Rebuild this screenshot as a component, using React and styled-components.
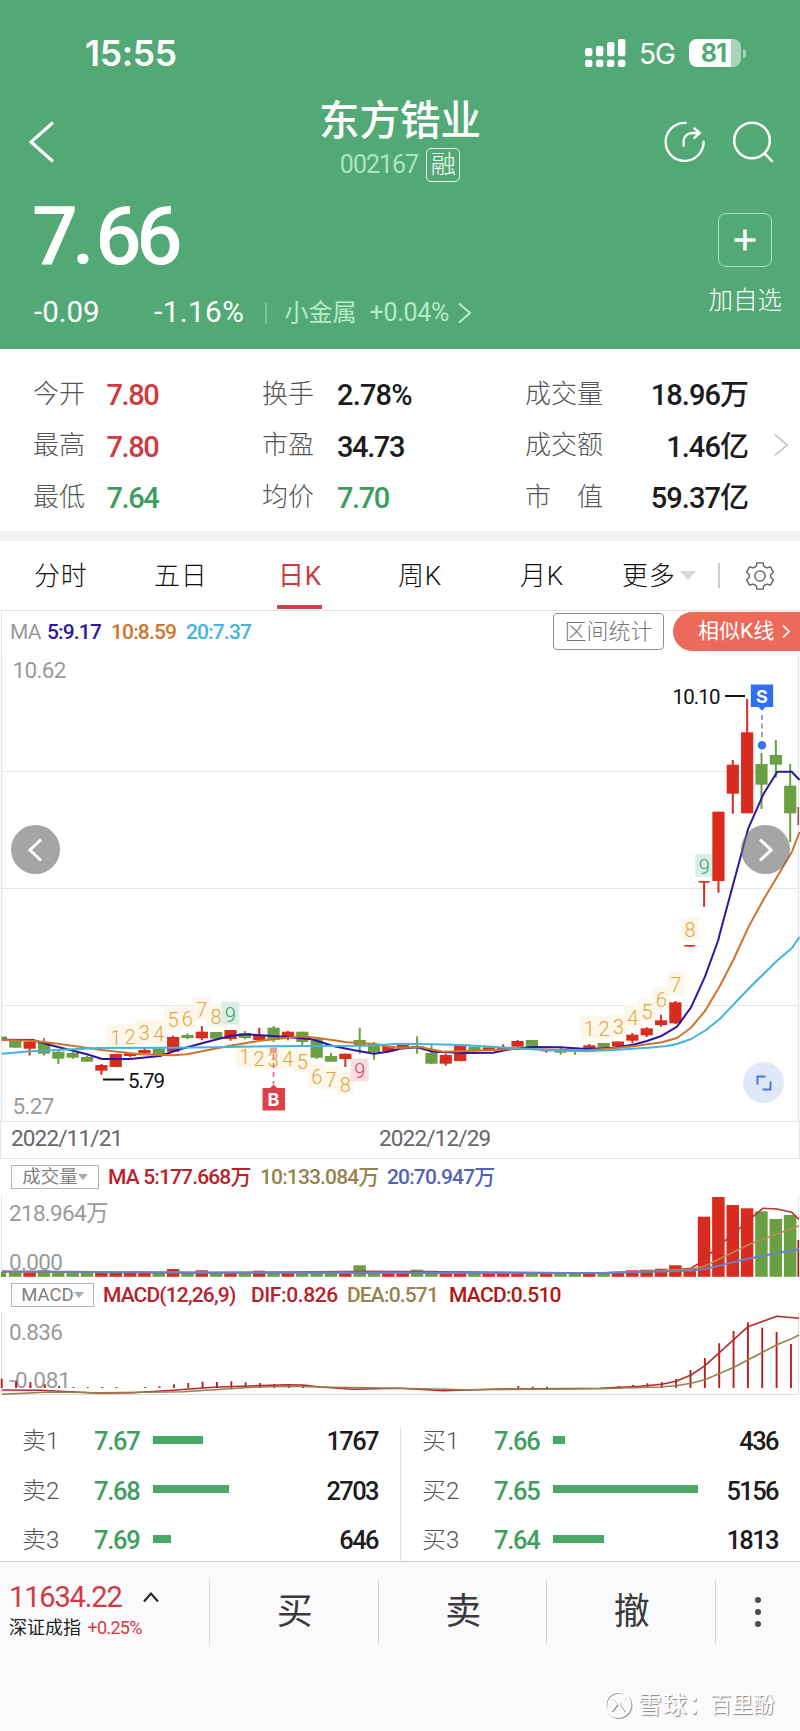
import React from "react";
import styled, { createGlobalStyle } from "styled-components";

const RED = "#d92b1e";
const GREEN = "#6a9f43";
const MA5 = "#2d17a0";
const MA10 = "#d0732f";
const MA20 = "#45b4dc";

const xAt = (i) => 15.3 + 14.35 * i;

// [up?, bodyTop, bodyBottom, high, low]
const candles = [
  [0, 1039, 1047.7],
  [1, 1041.5, 1048.7, 1041, 1055.5],
  [0, 1042, 1053.7, 1038, 1055.5],
  [0, 1051.7, 1058.7, 1051, 1064],
  [0, 1053, 1057.7, 1052, 1059],
  [0, 1057, 1061.7, 1056],
  [1, 1065, 1070.7, 1064, 1074.7],
  [1, 1054, 1067],
  [1, 1053, 1056, 1053, 1057],
  [1, 1050, 1053.5, 1048],
  [0, 1048.5, 1054],
  [1, 1037, 1051.7, 1035.7],
  [0, 1035, 1038, 1033.5, 1039.3],
  [1, 1031.7, 1038.3, 1026, 1040.3],
  [0, 1032, 1038.7],
  [1, 1030, 1039, 1030, 1040.7],
  [0, 1033, 1038, 1031, 1039.3],
  [1, 1035, 1040, 1027.7, 1041],
  [0, 1027.7, 1040, 1026, 1042],
  [1, 1031.7, 1036.7, 1031, 1040.3],
  [0, 1031.7, 1042, 1031.7, 1045.3],
  [0, 1039, 1057.7, 1039, 1059],
  [0, 1056, 1061.7, 1053],
  [1, 1053.7, 1059, 1053.7, 1067],
  [0, 1040, 1045.3, 1027.7, 1053.7],
  [0, 1043.7, 1052, 1042, 1059.7],
  [1, 1046, 1051.3],
  [1, 1045, 1047.5],
  [0, 1046, 1047.7, 1036.3, 1053.7],
  [0, 1053, 1063.7, 1045.3],
  [1, 1055, 1063.7, 1053.7, 1065.7],
  [1, 1046, 1061],
  [0, 1046.7, 1051, 1046.7, 1054],
  [1, 1047.3, 1051],
  [1, 1047.7, 1050, 1044.3],
  [1, 1041, 1046.7, 1040],
  [0, 1040, 1047],
  [1, 1050, 1051.3, 1050, 1052.7],
  [0, 1051, 1052.7, 1046.3, 1054.7],
  [0, 1050.3, 1052, 1050.3, 1054.7],
  [1, 1045.3, 1048, 1044],
  [0, 1043, 1047.3],
  [1, 1041.5, 1046.3],
  [1, 1034.7, 1040.7, 1033, 1043.3],
  [1, 1028.3, 1035.3, 1027.3, 1037],
  [1, 1020.3, 1025, 1014.7, 1026.7],
  [1, 1002.3, 1023.3, 1001, 1024],
  [1, 945, 946.6],
  [1, 881, 882.6, 881, 906.7],
  [1, 811.7, 881, 811.7, 892.7],
  [1, 764.7, 793.7, 760, 813.7],
  [1, 732.3, 813.3, 699],
  [0, 764, 784.7, 753, 809],
  [0, 755, 764.7, 740, 777.7],
  [0, 785.7, 813.3, 764, 842],
];

const ma5 =
  "2,1039.7 33,1040 50,1045 87,1054.3 102,1059 130,1059 160,1056 180,1049.3 202,1043.3 230,1036 247,1034.3 287,1037 312,1039.3 333,1046 353,1050 374,1053.7 388,1051.7 400,1048.8 417,1047.3 433,1051.7 467,1053 493,1052.7 513,1048.7 533,1047 560,1047.3 587,1049 613,1047.7 633,1044.7 647,1041 662,1035.7 677,1026.7 691,1007.3 705,976.7 718.3,940 720,933 748.3,828.3 763.3,794.3 777.3,771.7 791.7,771.7 799.5,780";
const ma10 =
  "2,1040 33,1040.7 60,1044 102,1050 140,1054.3 173,1055.3 187,1054.3 230,1045.7 260,1040.7 302,1036.3 320,1038.3 347,1042.3 374,1044 393,1047.3 400,1048 420,1047 443,1051.7 490,1050.3 517,1048.7 560,1050 587,1050.3 613,1048.3 633,1046.3 662,1042.3 677,1038 691,1027.7 705,1011 720,985.7 733.3,960 748.3,927.3 763.3,900 791.7,852.3 799.5,832";
const ma20 =
  "2,1053.7 30,1051.3 73,1049.3 100,1048 173,1047.7 213,1047.3 267,1046.3 300,1046 367,1045.7 400,1043.8 433,1044.3 467,1045.3 500,1047.3 560,1050.7 587,1051.3 613,1050 648,1047.7 667,1046 677,1044 691,1039 706,1030 720,1018.7 748.3,989 776.7,961 791.7,948.3 799.5,937";

// [digit, x, baseline centre, tone]
const marks = [
  [1, 115.7, 1038],
  [2, 130, 1036.7],
  [3, 144.3, 1032.5],
  [4, 158.7, 1033.5],
  [5, 173, 1020],
  [6, 187.3, 1018.5],
  [7, 201.7, 1010.3],
  [8, 216, 1017],
  [9, 230.3, 1014.7, "sell"],
  [1, 244.7, 1057],
  [2, 259, 1058.7],
  [3, 273.3, 1059.5],
  [4, 287.7, 1058.7],
  [5, 302.3, 1062.3],
  [6, 316.7, 1077],
  [7, 331, 1079.5],
  [8, 345.3, 1084.5],
  [9, 359.7, 1071.3, "buy"],
  [1, 589.3, 1029],
  [2, 604, 1029.3],
  [3, 618.3, 1026.7],
  [4, 632.7, 1018],
  [5, 647, 1011.7],
  [6, 661.3, 999.7],
  [7, 675.7, 985],
  [8, 690, 930.3],
  [9, 704.3, 866.7, "sell"],
];
const markTone = {
  plain: ["#dfa73b", "#fdf6ea"],
  sell: ["#35a06a", "#d9efe5"],
  buy: ["#d8415a", "#fadde1"],
};

const volTops = {
  2: 1270.3, 11: 1269, 13: 1270.3, 17: 1270.7, 24: 1265.3, 28: 1269.7, 29: 1270.7,
  43: 1270.3, 44: 1269.7, 45: 1268.7, 46: 1265.3, 47: 1268, 48: 1216.7, 49: 1197,
  50: 1205, 51: 1208.3, 52: 1211.3, 53: 1219, 54: 1215,
};

const macdTops = {
  "-1": 1378.7, 0: 1380.7, 1: 1382, 2: 1384.3, 3: 1386, 4: 1387, 5: 1387, 6: 1387, 7: 1387,
  9: 1387, 10: 1386.3, 11: 1384.3, 12: 1383, 13: 1381.7, 14: 1382, 15: 1381.3, 16: 1382.3,
  17: 1383, 18: 1384, 19: 1384, 20: 1385, 35: 1386, 36: 1386.6, 37: 1386.8, 42: 1386,
  43: 1385, 44: 1383.3, 45: 1382, 46: 1379, 47: 1370, 48: 1358, 49: 1343.3, 50: 1331,
  51: 1322.3, 52: 1327.7, 53: 1332, 54: 1344,
};

const asks = [
  ["卖1", "7.67", 50, "1767"],
  ["卖2", "7.68", 76, "2703"],
  ["卖3", "7.69", 18, "646"],
];
const bids = [
  ["买1", "7.66", 12, "436"],
  ["买2", "7.65", 145, "5156"],
  ["买3", "7.64", 51, "1813"],
];

const SignalIcon = () => (
  <svg width="41" height="29" viewBox="0 0 41 29" fill="#fff">
    {[9, 7, 3, 0].map((top, i) => (
      <g key={i}>
        <rect x={i * 11} y={top} width="7.4" height={17.3 - top} rx="2.4" />
        <rect x={i * 11} y="20.7" width="7.4" height="7.4" rx="2.4" />
      </g>
    ))}
  </svg>
);

const ShareIcon = () => (
  <svg width="42" height="42" viewBox="0 0 42 42" fill="none" stroke="#fff" strokeWidth="2.4" strokeLinecap="round" strokeLinejoin="round">
    <path d="M21.6 1.9A19 19 0 1 0 39.6 20.6" />
    <path d="M19.6 24.6V20.5A8.5 8.5 0 0 1 28.1 12H35.4" />
    <path d="M30.4 7.4L35.6 12L30.4 16.8" />
  </svg>
);

const SearchIcon = () => (
  <svg width="44" height="44" viewBox="0 0 44 44" fill="none" stroke="#fff" strokeWidth="2.5" strokeLinecap="round">
    <circle cx="21" cy="20.5" r="17.8" />
    <path d="M33.6 33.4L41 41.2" />
  </svg>
);

const GearIcon = () => (
  <svg width="30" height="30" viewBox="0 0 30 30" fill="none" stroke="#555" strokeWidth="1.3" strokeLinejoin="round">
    <path d="M12 1.8H18L18.9 5.4L21.8 7L25.4 5.9L28.3 11L25.7 13.6V16.4L28.3 19L25.4 24.1L21.8 23L18.9 24.6L18 28.2H12L11.1 24.6L8.2 23L4.6 24.1L1.7 19L4.3 16.4V13.6L1.7 11L4.6 5.9L8.2 7L11.1 5.4Z" />
    <circle cx="15" cy="15" r="5.1" />
  </svg>
);

const Chevron = ({ w, h, color, stroke = 2, left }) => (
  <svg width={w} height={h} viewBox={`0 0 ${w} ${h}`} fill="none" stroke={color} strokeWidth={stroke}>
    <path d={left ? `M${w - 2} 1.5L2 ${h / 2}L${w - 2} ${h - 1.5}` : `M2 1.5L${w - 2} ${h / 2}L2 ${h - 1.5}`} />
  </svg>
);

const Header = () => (
  <StyledHeader>
    <StatusBar>
      <Clock>15:55</Clock>
      <StatusRight>
        <SignalIcon />
        <Network>5G</Network>
        <Battery>
          <BatteryLevel>81</BatteryLevel>
        </Battery>
        <BatteryTip />
      </StatusRight>
    </StatusBar>
    <TitleBar>
      <Chevron w={26} h={42} color="#fff" stroke={3.2} left />
      <TitleBlock>
        <h1>东方锆业</h1>
        <Code>
          002167 <span>融</span>
        </Code>
      </TitleBlock>
      <HeaderIcons>
        <ShareIcon />
        <SearchIcon />
      </HeaderIcons>
    </TitleBar>
    <QuoteRow>
      <div>
        <Price>
          7<span>.</span>66
        </Price>
        <ChangeRow>
          <Change $w={120}>-0.09</Change>
          <Change $w={110} $ls={0.5}>-1.16%</Change>
          <ChangeDivider />
          <Sector>小金属</Sector>
          <SectorChange>+0.04%</SectorChange>
          <Chevron w={15} h={22} color="#b4ebc8" stroke={2.2} />
        </ChangeRow>
      </div>
      <AddBlock>
        <AddButton>
          <svg width="22" height="22" viewBox="0 0 22 22" stroke="#fff" strokeWidth="3.6">
            <path d="M11 0.5V21.5M0.5 11H21.5" />
          </svg>
        </AddButton>
        加自选
      </AddBlock>
    </QuoteRow>
  </StyledHeader>
);

const Stats = () => (
  <StyledStats>
    <StatLabel>今开</StatLabel>
    <StatValue $color="#cf3b42">7.80</StatValue>
    <StatLabel>换手</StatLabel>
    <StatValue $ls={-0.8}>2.78%</StatValue>
    <StatLabel>成交量</StatLabel>
    <StatValue $end>18.96万</StatValue>
    <span />
    <StatLabel>最高</StatLabel>
    <StatValue $color="#cf3b42">7.80</StatValue>
    <StatLabel>市盈</StatLabel>
    <StatValue>34.73</StatValue>
    <StatLabel>成交额</StatLabel>
    <StatValue $end>1.46亿</StatValue>
    <StatMore>
      <Chevron w={16} h={24} color="#bdbdc2" stroke={1.6} />
    </StatMore>
    <StatLabel>最低</StatLabel>
    <StatValue $color="#3b9e5c">7.64</StatValue>
    <StatLabel>均价</StatLabel>
    <StatValue $color="#3b9e5c">7.70</StatValue>
    <StatLabel>市　值</StatLabel>
    <StatValue $end>59.37亿</StatValue>
    <span />
  </StyledStats>
);

const Tabs = () => (
  <StyledTabs>
    <Tab $w={120}>分时</Tab>
    <Tab $w={124}>五日</Tab>
    <Tab $w={120} $active>
      <span>日K</span>
    </Tab>
    <Tab $w={122}>周K</Tab>
    <Tab $w={102}>月K</Tab>
    <Tab $w={58}>更多</Tab>
    <Triangle $size={8} $color="#d8d8d8" />
    <TabDivider />
    <GearIcon />
  </StyledTabs>
);

const PriceChart = () => (
  <svg width="800" height="467" viewBox="0 655 800 467">
    <g stroke="#e3e6e8" strokeWidth="1.2">
      <path d="M1.5 771.5H799M1.5 888.5H799M1.5 1005.5H799M1.5 655V1122M798.6 655V1122" />
    </g>
    <g fontFamily="Roboto" fontSize="22.5" fill="#9a9a9a">
      <text x="12.5" y="677.5" textLength="54">10.62</text>
      <text x="12.5" y="1114" textLength="42">5.27</text>
    </g>
    {marks.map(([n, x, y, tone = "plain"], i) => (
      <rect key={i} x={x - 9} y={y - 13} width="18" height="23" fill={markTone[tone][1]} />
    ))}
    <rect x="1.5" y="1036.5" width="5.5" height="4.5" fill={GREEN} />
    {candles.map(([up, top, bottom, high = top, low = bottom], i) => (
      <g key={i} fill={up ? RED : GREEN}>
        <rect x={xAt(i) - 1} y={high} width="2" height={low - high} />
        <rect x={xAt(i) - (bottom - top < 2 && up ? 5.4 : 6.1)} y={top} width={bottom - top < 2 && up ? 10.8 : 12.2} height={bottom - top} />
      </g>
    ))}
    <rect x="797.5" y="807" width="1.6" height="18" fill="#9a4a45" />
    <g fill="none" strokeWidth="2" strokeLinejoin="round">
      <polyline points={ma5} stroke={MA5} />
      <polyline points={ma10} stroke={MA10} />
      <polyline points={ma20} stroke={MA20} />
    </g>
    <g fontFamily="Roboto" fontSize="20" fontWeight="300" textAnchor="middle">
      {marks.map(([n, x, y, tone = "plain"], i) => (
        <text key={i} x={x} y={y + 7} fill={markTone[tone][0]}>
          {n}
        </text>
      ))}
    </g>
    <g fontFamily="Roboto" fontSize="20.5" fill="#111">
      <text x="128" y="1088" textLength="37">5.79</text>
      <text x="672.5" y="704" textLength="48">10.10</text>
      <path d="M103 1079.5H124M725 696H745" stroke="#111" strokeWidth="1.8" />
    </g>
    <rect x="270" y="1047.5" width="7" height="5" fill="#ee9a94" />
    <path d="M273.5 1054V1084" stroke="#de6a6f" strokeWidth="1.6" strokeDasharray="5 4" />
    <path d="M262.5 1088H270L273.5 1084.5L277 1088H285V1110.5H262.5Z" fill="#dd4048" />
    <path d="M750.8 684.5H773.2V707H765.5L762 710.8L758.5 707H750.8Z" fill="#2f6ff0" />
    <path d="M762 715V740" stroke="#6a8fc4" strokeWidth="1.6" strokeDasharray="5 3.5" />
    <circle cx="762" cy="745.2" r="4.2" fill="#3474f2" />
    <g fontFamily="Inter" fontWeight="700" fontSize="18" fill="#fff" textAnchor="middle">
      <text x="273.5" y="1106">B</text>
      <text x="762" y="702.5">S</text>
    </g>
  </svg>
);

const VolumeChart = () => (
  <svg width="800" height="83" viewBox="0 1195 800 83">
    <path d="M1.5 1195V1277M798.6 1195V1277" stroke="#e3e6e8" />
    <g fontFamily="Roboto, 'Noto Sans CJK SC'" fontSize="22.5" fill="#9a9a9a">
      <text x="9" y="1221" textLength="99.5">218.964万</text>
      <text x="9" y="1270" textLength="54">0.000</text>
    </g>
    <rect x="1" y="1272" width="5" height="5" fill={GREEN} />
    {candles.map(([up], i) => {
      const top = volTops[i] || 1272.3;
      return <rect key={i} x={xAt(i) - 6.3} y={top} width="12.5" height={1276.8 - top} fill={up ? RED : GREEN} />;
    })}
    <rect x="797.4" y="1240" width="1.8" height="36.8" fill="#9e2a25" />
    <g fill="none" strokeWidth="1.6">
      <polyline points="2,1271.7 200,1272.7 370,1271.3 600,1273 667,1270.7 691,1268.3 698,1264 762.7,1208.3 777,1209 791.7,1212.3 799,1219.3" stroke="#c03438" />
      <polyline points="2,1271.7 600,1273 691,1269.3 705,1266 748,1245 799,1225.7" stroke="#b58d55" />
      <polyline points="2,1271.3 200,1272.7 600,1273 691,1270.7 705,1269 748,1258.7 799,1249" stroke="#6b7fc4" strokeWidth="2" />
    </g>
  </svg>
);

const MacdChart = () => (
  <svg width="800" height="83" viewBox="0 1313 800 83">
    <path d="M1.5 1313V1394.5H799M798.6 1313V1394.5" stroke="#dcdcdc" fill="none" />
    <g fontFamily="Roboto" fontSize="22.5" fill="#9a9a9a">
      <text x="9" y="1340" textLength="54">0.836</text>
      <text x="9" y="1388" textLength="62">-0.081</text>
    </g>
    {Object.entries(macdTops).map(([i, top]) => (
      <rect key={i} x={xAt(Number(i)) - 0.2} y={top} width="1.9" height={1388 - top} fill="#b8201f" />
    ))}
    <g fill="none" strokeWidth="1.6" strokeLinejoin="round">
      <polyline points="2,1390 40,1390.3 100,1393.3 133,1392.7 173,1390.3 213,1387.3 287,1384.7 303,1385 320,1387 353,1389.3 400,1388.3 443,1390.7 500,1389 600,1388.3 640,1386.3 662,1384.3 676,1381.3 691,1375 705,1365.7 734,1339.3 748,1326.7 777,1316.3 799,1318.3" stroke="#b52a2c" />
      <polyline points="2,1394.3 50,1392 100,1392.7 183,1391.7 253,1387.3 287,1386.3 333,1387.3 400,1388.3 467,1389.7 600,1388.7 660,1387 676,1385.7 691,1383.3 705,1379.7 734,1367.3 763,1352 777,1344.7 791,1339 799,1335" stroke="#94814d" />
    </g>
  </svg>
);

const BookSide = ({ rows }) => (
  <StyledBookSide>
    {rows.map(([name, price, size, amount]) => (
      <BookRow key={name}>
        <BookName>{name}</BookName>
        <BookPrice>{price}</BookPrice>
        <BookBar style={{ width: size }} />
        <BookAmount>{amount}</BookAmount>
      </BookRow>
    ))}
  </StyledBookSide>
);

const Footer = () => (
  <StyledFooter>
    <FooterBar>
      <IndexBlock>
        <IndexValue>
          11634.22
          <svg width="18" height="12" viewBox="0 0 18 12" fill="none" stroke="#222" strokeWidth="2">
            <path d="M2 10.5L9 2.5L16 10.5" />
          </svg>
        </IndexValue>
        <IndexName>
          深证成指 <em>+0.25%</em>
        </IndexName>
      </IndexBlock>
      <TradeButton>买</TradeButton>
      <TradeButton>卖</TradeButton>
      <TradeButton>撤</TradeButton>
      <MoreButton>
        <i />
        <i />
        <i />
      </MoreButton>
    </FooterBar>
    <Watermark>
      <svg width="29" height="30" viewBox="0 0 29 30" fill="none">
        <g stroke="#98989b" strokeWidth="1.6">
          <circle cx="15" cy="15.5" r="12.6" />
          <path d="M7 9.5H9L13.5 15.5L8.5 22M22 8L17 14.5L21.5 21.5" strokeLinejoin="round" />
        </g>
        <g stroke="#fff" strokeWidth="2">
          <circle cx="14" cy="14.5" r="12.4" />
          <path d="M6 8.5H8L12 14.5L7 21M21.5 7L18 14.5L22 20.5" strokeLinejoin="round" />
        </g>
      </svg>
      <span>雪球：</span>
      <span>百里酚</span>
    </Watermark>
  </StyledFooter>
);

const App = () => (
  <Page>
    <GlobalStyle />
    <Header />
    <Stats />
    <Gap />
    <Tabs />
    <ChartArea>
      <MaRow>
        <Legend $color="#9a9a9a" $w={37}>MA</Legend>
        <Legend $color={MA5} $w={64} $bold>5:9.17</Legend>
        <Legend $color={MA10} $w={75} $bold>10:8.59</Legend>
        <Legend $color={MA20} $bold>20:7.37</Legend>
        <RangeButton>区间统计</RangeButton>
        <SimilarButton>
          相似K线
          <Chevron w={10} h={15} color="#fff" stroke={1.7} />
        </SimilarButton>
      </MaRow>
      <PriceChart />
      <NavButton $side="left">
        <Chevron w={15} h={24} color="#fff" stroke={3} left />
      </NavButton>
      <NavButton $side="right">
        <Chevron w={15} h={24} color="#fff" stroke={3} />
      </NavButton>
      <ExpandButton>
        <svg width="16" height="16" viewBox="0 0 16 16" fill="none" stroke="#4f78d6" strokeWidth="2">
          <path d="M1.5 9.5V1.5H9.5M14.5 6.5V14.5H6.5" />
        </svg>
      </ExpandButton>
    </ChartArea>
    <DateRow>
      <span>2022/11/21</span>
      <span>2022/12/29</span>
    </DateRow>
    <IndicatorRow>
      <Picker $w={88}>
        成交量
        <Triangle $size={5} $color="#aaa" />
      </Picker>
      <Legend $color="#b8222a" $w={152} $bold>MA 5:177.668万</Legend>
      <Legend $color="#98824c" $w={127} $bold>10:133.084万</Legend>
      <Legend $color="#5264b8" $bold>20:70.947万</Legend>
    </IndicatorRow>
    <VolumeChart />
    <IndicatorRow>
      <Picker $w={83}>
        MACD
        <Triangle $size={5} $color="#aaa" />
      </Picker>
      <Legend $color="#b8222a" $w={148} $bold>MACD(12,26,9)</Legend>
      <Legend $color="#b8222a" $w={96} $ls={-0.4} $bold>DIF:0.826</Legend>
      <Legend $color="#98824c" $w={102} $bold>DEA:0.571</Legend>
      <Legend $color="#ae1712" $ls={-0.7} $bold>MACD:0.510</Legend>
    </IndicatorRow>
    <MacdChart />
    <Book>
      <BookSide rows={asks} />
      <BookSide rows={bids} />
    </Book>
    <Footer />
  </Page>
);

const GlobalStyle = createGlobalStyle`
  * {
    box-sizing: border-box;
  }
  body {
    margin: 0;
    background: #fff;
  }
  svg {
    display: block;
    flex: none;
  }
`;
const Page = styled.div`
  width: 800px;
  height: 1731px;
  overflow: hidden;
  display: flex;
  flex-direction: column;
  background: #fff;
  font-family: Roboto, "Noto Sans CJK SC", sans-serif;
  line-height: 1.2;
  white-space: nowrap;
`;
const StyledHeader = styled.header`
  height: 349px;
  flex: none;
  background: #53a976;
  color: #fff;
  padding-top: 31px;
`;
const StatusBar = styled.div`
  display: flex;
  height: 44px;
  align-items: center;
  justify-content: space-between;
  padding: 0 54px 0 85px;
  font-family: Inter, sans-serif;
`;
const Clock = styled.div`
  font-size: 35.5px;
  font-weight: 600;
  letter-spacing: -0.3px;
  padding-top: 3px;
`;
const StatusRight = styled.div`
  display: flex;
  align-items: center;
`;
const Network = styled.div`
  font-size: 28px;
  letter-spacing: -1px;
  width: 50px;
  margin-left: 13px;
  padding-top: 3px;
`;
const Battery = styled.div`
  width: 52px;
  height: 28px;
  border-radius: 8px;
  background: linear-gradient(90deg, #fff 42px, #a9d4ba 42px);
  display: flex;
  justify-content: center;
  align-items: center;
`;
const BatteryLevel = styled.div`
  color: #53a976;
  font-size: 25px;
  font-weight: 700;
  line-height: 28px;
  letter-spacing: -0.8px;
  margin-right: 3px;
`;
const BatteryTip = styled.div`
  width: 3px;
  height: 9px;
  margin-left: 2px;
  border-radius: 0 3px 3px 0;
  background: #a9d4ba;
`;
const TitleBar = styled.div`
  display: flex;
  align-items: center;
  justify-content: space-between;
  height: 107px;
  margin-top: 11px;
  padding: 0 25px 0 29px;
  > svg {
    margin-top: 5px;
  }
`;
const TitleBlock = styled.div`
  display: flex;
  flex-direction: column;
  align-items: center;
  margin-left: 81px;
  margin-top: -2px;
  h1 {
    margin: 0;
    font-size: 40.5px;
    line-height: 52px;
    font-weight: 500;
  }
`;
const Code = styled.div`
  display: flex;
  align-items: center;
  gap: 8px;
  font-size: 25px;
  letter-spacing: -1px;
  line-height: 34px;
  height: 35px;
  color: #a9e6c0;
  margin-top: 1px;
  span {
    width: 34px;
    height: 34px;
    line-height: 32px;
    border: 1.5px solid #e8fff2;
    border-radius: 5px;
    color: #fff;
    text-align: center;
    font-weight: 300;
    letter-spacing: 0;
  }
`;
const HeaderIcons = styled.div`
  display: flex;
  align-items: center;
  gap: 25px;
  margin-top: 4px;
`;
const QuoteRow = styled.div`
  display: flex;
  justify-content: space-between;
  padding: 5px 18px 0 34px;
`;
const Price = styled.div`
  font-size: 81px;
  line-height: 78px;
  font-weight: 500;
  letter-spacing: -5px;
  margin-left: -2px;
  span {
    letter-spacing: 1px;
    margin-left: -1px;
  }
`;
const ChangeRow = styled.div`
  display: flex;
  align-items: center;
  height: 40px;
  margin-top: 17px;
`;
const Change = styled.div`
  width: ${(p) => p.$w}px;
  font-size: 29.5px;
  letter-spacing: ${(p) => p.$ls || 0}px;
`;
const ChangeDivider = styled.div`
  width: 1.5px;
  height: 21px;
  margin: 0 18px 0 1px;
  background: #7cc497;
`;
const Sector = styled.div`
  font-size: 24px;
  color: #b4ebc8;
  width: 85px;
`;
const SectorChange = styled.div`
  font-size: 25px;
  letter-spacing: -0.3px;
  color: #b4ebc8;
  width: 87px;
`;
const AddBlock = styled.div`
  display: flex;
  flex-direction: column;
  align-items: center;
  font-size: 24.5px;
  font-weight: 300;
  line-height: 34px;
  padding-top: 15px;
`;
const AddButton = styled.div`
  width: 54px;
  height: 54px;
  border: 1.5px solid #a4e2bb;
  border-radius: 8px;
  display: flex;
  align-items: center;
  justify-content: center;
  margin-bottom: 17px;
`;
const StyledStats = styled.section`
  display: grid;
  grid-template-columns: 73.5px 155.5px 75px 188px 86px 137px 1fr;
  grid-auto-rows: 51.3px;
  align-items: center;
  height: 182px;
  flex: none;
  padding: 21px 0 0 33px;
`;
const StatLabel = styled.div`
  font-size: 26px;
  font-weight: 300;
  color: #555;
  margin-top: -2px;
`;
const StatValue = styled.div`
  font-size: 29px;
  font-weight: 500;
  letter-spacing: ${(p) => p.$ls || (p.$end ? -0.95 : -1.4)}px;
  color: ${(p) => p.$color || "#1c1c1e"};
  text-align: ${(p) => (p.$end ? "right" : "left")};
`;
const StatMore = styled.div`
  padding-left: 24.5px;
  margin-top: -3px;
`;
const Gap = styled.div`
  height: 10px;
  flex: none;
  background: #f2f2f4;
`;
const StyledTabs = styled.nav`
  height: 70px;
  flex: none;
  display: flex;
  align-items: center;
  padding-left: 34px;
  border-bottom: 1px solid #e4e4e4;
`;
const Tab = styled.div`
  width: ${(p) => p.$w}px;
  height: 69px;
  line-height: 70px;
  font-size: 26px;
  font-weight: ${(p) => (p.$active ? 400 : 300)};
  letter-spacing: 0.8px;
  color: ${(p) => (p.$active ? "#cf3b42" : "#111")};
  span {
    display: inline-block;
    height: 68px;
    width: 45px;
    margin-left: -1px;
    padding-left: 1px;
    border-bottom: 4px solid #cf4348;
  }
`;
const Triangle = styled.div`
  border: ${(p) => p.$size}px solid transparent;
  border-top: ${(p) => p.$size + 1}px solid ${(p) => p.$color};
  border-bottom: 0;
`;
const TabDivider = styled.div`
  width: 1.5px;
  height: 25px;
  margin: 0 25px 0 22px;
  background: #ccc;
`;
const ChartArea = styled.section`
  position: relative;
  height: 511px;
  flex: none;
  border-bottom: 1px solid #e3e6e8;
`;
const MaRow = styled.div`
  display: flex;
  align-items: center;
  height: 44px;
  margin-left: 1px;
  padding: 0 0 3px 8px;
  border-left: 1px solid #e3e6e8;
`;
const Legend = styled.div`
  width: ${(p) => (p.$w ? p.$w + "px" : "auto")};
  flex: none;
  padding-top: 2px;
  font-size: 21px;
  font-weight: ${(p) => (p.$bold ? 500 : 400)};
  letter-spacing: ${(p) => p.$ls || -0.85}px;
  color: ${(p) => p.$color};
`;
const RangeButton = styled.div`
  margin-left: auto;
  width: 111px;
  height: 37px;
  border: 1.5px solid #8d8d8d;
  border-radius: 4px;
  font-size: 22px;
  font-weight: 300;
  line-height: 35px;
  text-align: center;
  color: #777;
`;
const SimilarButton = styled.div`
  display: flex;
  align-items: center;
  justify-content: space-between;
  width: 127px;
  height: 39px;
  margin-left: 9px;
  padding: 0 9px 0 25px;
  border-radius: 20px 0 0 20px;
  background: #ec6a5a;
  color: #fff;
  font-size: 21px;
`;
const NavButton = styled.div`
  position: absolute;
  top: 214px;
  ${(p) => (p.$side === "left" ? "left: 11px" : "right: 10.5px")};
  width: 49px;
  height: 49px;
  border-radius: 50%;
  background: rgba(110, 110, 110, 0.62);
  display: flex;
  align-items: center;
  justify-content: center;
`;
const ExpandButton = styled.div`
  position: absolute;
  right: 16px;
  bottom: 18px;
  width: 41px;
  height: 41px;
  border-radius: 50%;
  background: #dfe8f9;
  display: flex;
  align-items: center;
  justify-content: center;
`;
const DateRow = styled.div`
  display: grid;
  grid-template-columns: 368px 1fr;
  align-items: center;
  height: 37px;
  flex: none;
  padding: 0 0 3px 10px;
  border: solid #e3e6e8;
  border-width: 0 1px 1px 1px;
  font-size: 22.5px;
  letter-spacing: -0.85px;
  color: #666;
`;
const IndicatorRow = styled.div`
  display: flex;
  align-items: center;
  height: 36px;
  flex: none;
  padding-left: 11px;
  & + svg {
    margin-bottom: -1px;
  }
`;
const Picker = styled.div`
  width: ${(p) => p.$w}px;
  height: 24px;
  flex: none;
  margin-right: 9px;
  border: 1px solid #b5b5b5;
  display: flex;
  align-items: center;
  justify-content: center;
  font-size: 18.5px;
  line-height: 22px;
  color: #808080;
`;
const Book = styled.section`
  height: 166px;
  flex: none;
  display: grid;
  grid-template-columns: 400px 400px;
  padding-top: 32px;
`;
const StyledBookSide = styled.div`
  padding: 0 22px;
  height: 134px;
  overflow: hidden;
  & + & {
    border-left: 1px solid #e4e4e4;
    padding-left: 21px;
  }
`;
const BookRow = styled.div`
  display: flex;
  align-items: center;
  height: 49.3px;
  margin-top: -10px;
  & + & {
    margin-top: 0;
  }
`;
const BookName = styled.div`
  width: 72px;
  font-size: 24px;
  font-weight: 300;
  color: #555;
`;
const BookPrice = styled.div`
  width: 59px;
  font-size: 25.5px;
  font-weight: 500;
  letter-spacing: -1.3px;
  color: #3f9f5f;
`;
const BookBar = styled.div`
  height: 8px;
  background: #4ba968;
  margin-bottom: 3px;
`;
const BookAmount = styled.div`
  margin-left: auto;
  font-size: 25.5px;
  font-weight: 500;
  letter-spacing: -1.6px;
  color: #1c1c1e;
`;
const StyledFooter = styled.footer`
  height: 170px;
  flex: none;
  display: flex;
  flex-direction: column;
  justify-content: space-between;
  border-top: 1px solid #c9c9cc;
  background: #fafafc;
`;
const FooterBar = styled.div`
  display: grid;
  grid-template-columns: 209px 168.5px 168.5px 168.5px 1fr;
  height: 62px;
  margin-top: 18px;
`;
const IndexBlock = styled.div`
  padding-left: 9px;
`;
const IndexValue = styled.div`
  display: flex;
  align-items: center;
  gap: 20px;
  font-size: 29px;
  line-height: 34px;
  letter-spacing: -1.15px;
  color: #d13a42;
`;
const IndexName = styled.div`
  font-size: 18px;
  line-height: 28px;
  color: #222;
  em {
    margin-left: 2px;
    font-style: normal;
    letter-spacing: -0.7px;
    color: #d13a42;
  }
`;
const TradeButton = styled.div`
  border-left: 1px solid #d6d6d9;
  padding-left: 2px;
  font-size: 36px;
  line-height: 64px;
  text-align: center;
  color: #3a3a3c;
`;
const MoreButton = styled.div`
  border-left: 1px solid #d6d6d9;
  display: flex;
  flex-direction: column;
  align-items: center;
  justify-content: center;
  gap: 6.3px;
  i {
    width: 6px;
    height: 6px;
    border-radius: 50%;
    background: #4a4a4c;
  }
`;
const Watermark = styled.div`
  display: flex;
  align-items: center;
  padding: 0 0 11px 604px;
  font-size: 23.5px;
  font-weight: 500;
  letter-spacing: 1.5px;
  line-height: 30px;
  color: #fff;
  text-shadow: 1px 1px 1px #838386;
  span {
    margin-left: 5px;
    width: 67px;
  }
  span + span {
    letter-spacing: 0;
    font-size: 21.5px;
    font-weight: 400;
  }
`;

export default App;
